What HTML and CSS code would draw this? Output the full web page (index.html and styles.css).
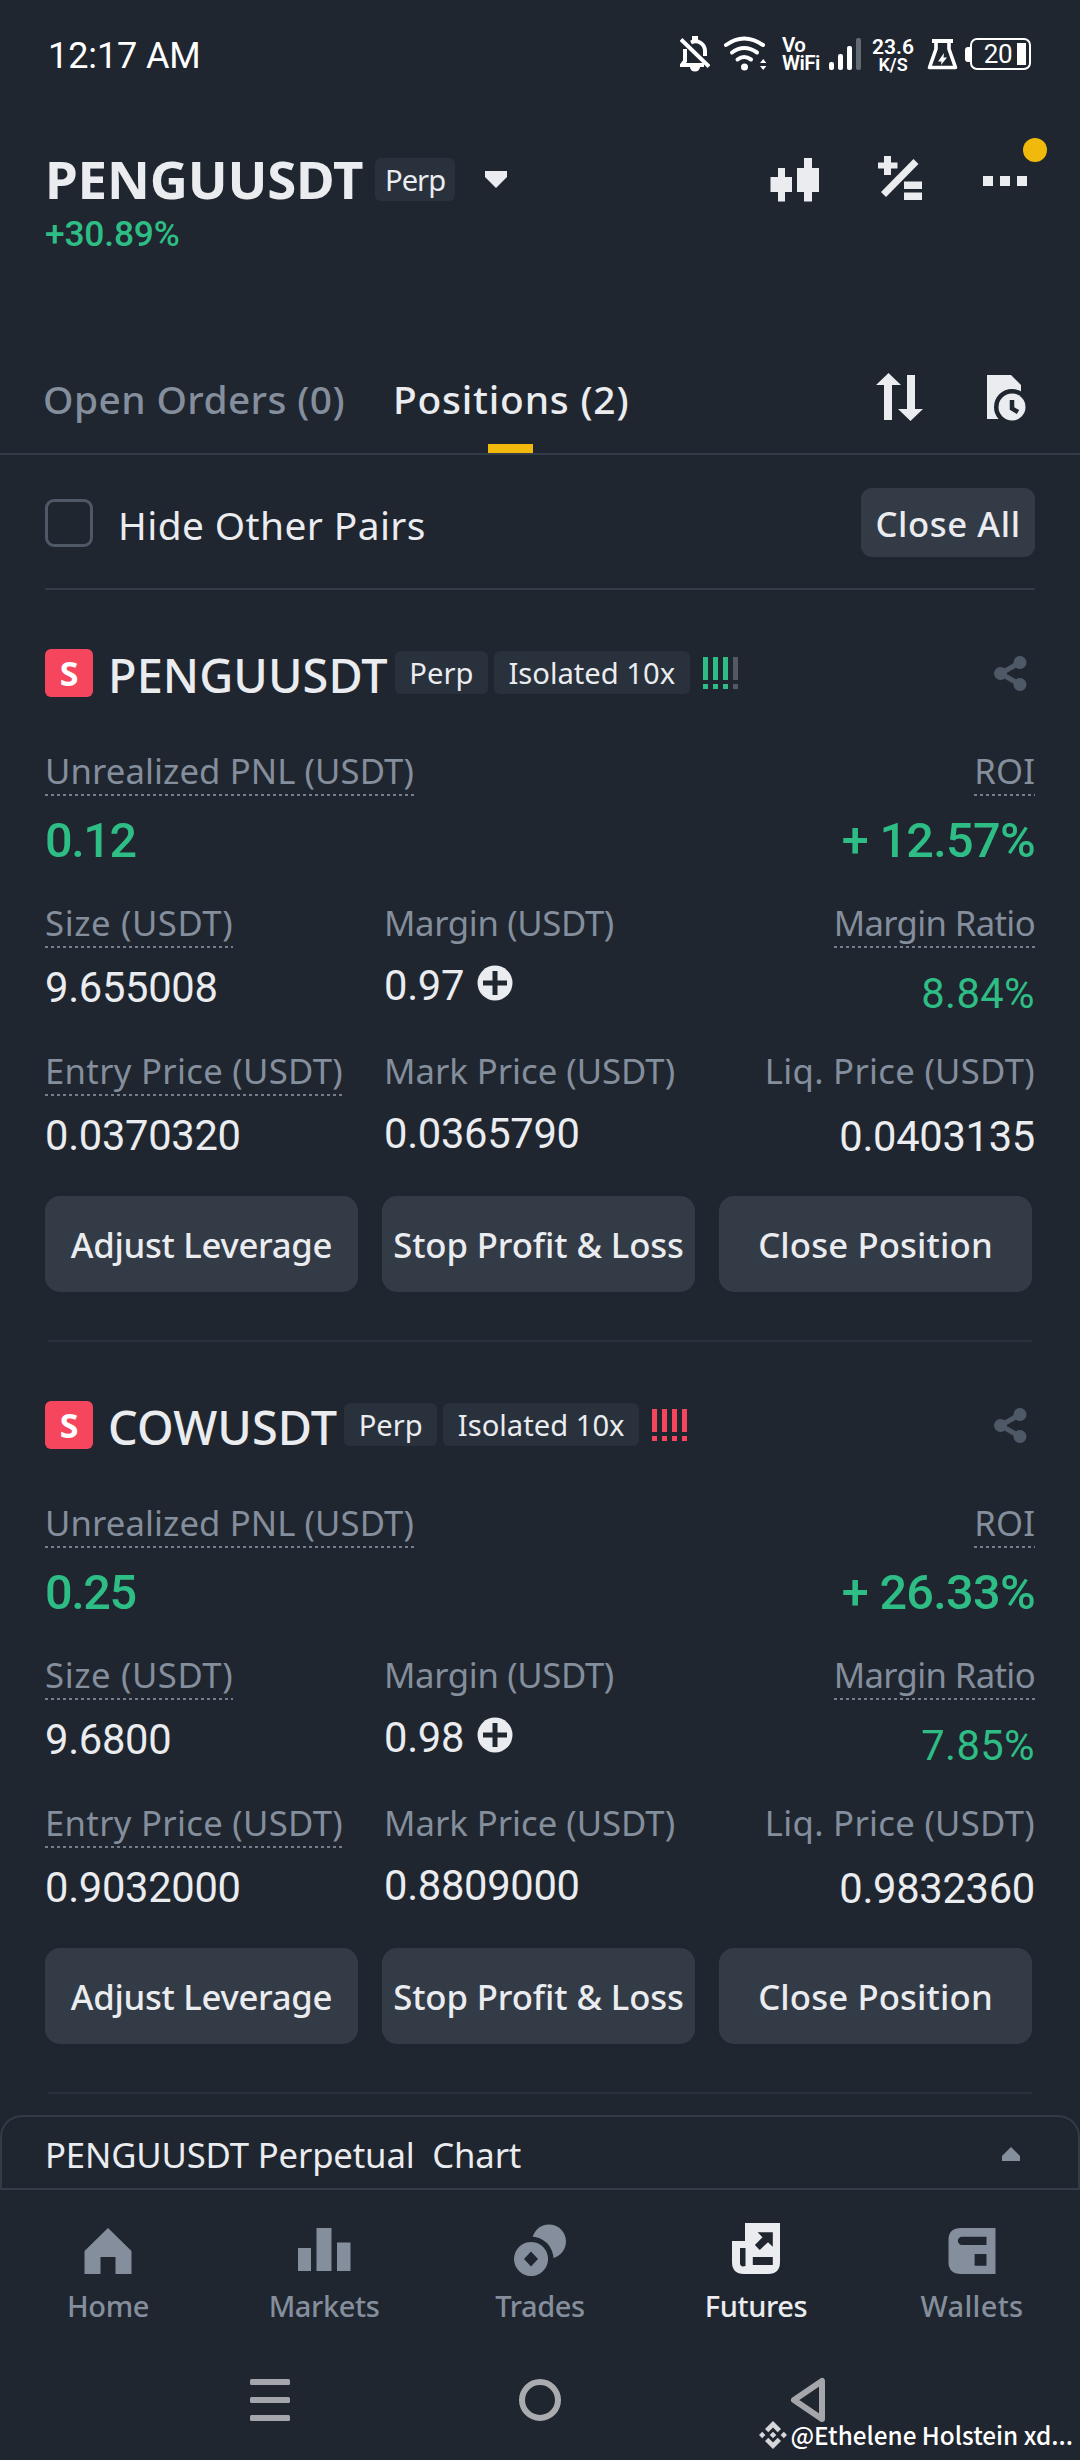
FILE: index.html
```html
<!DOCTYPE html>
<html lang="en">

<head>
    <meta charset="utf-8">
    <title>PENGUUSDT Perp</title>
    <link rel="stylesheet" href="styles.css">
</head>

<body>
    <div class="statusbar">
        <span class="clock">12:17 AM</span>
        <div class="status-icons">
            <svg class="bell" width="30" height="36" viewBox="0 0 30 36" fill="none" stroke="#fff" stroke-width="4">
                <path d="M5 13V25L2 29H24"/>
                <path d="M11 6.500C18 3 25 8 25 15V20"/>
                <path d="M1 3.500L29 30.500"/>
                <path d="M12 2.500H18" stroke-width="5"/>
                <path d="M10 31a5 4.500 0 0 0 10 0z" fill="#fff" stroke="none"/>
            </svg>
            <svg class="wifi" width="44" height="36" viewBox="0 0 44 36" fill="none" stroke="#fff" stroke-width="4" stroke-linecap="round">
                <path d="M3 9Q21 -4 40 9"/>
                <path d="M9 16.500Q21 7.500 34 16.500"/>
                <path d="M14.500 23.500Q21 18.500 28 23.500"/>
                <circle cx="21.500" cy="31" r="3.500" fill="#fff" stroke="none"/>
                <path d="M37 27l3.200-4 3.200 4zM37 30h6.400l-3.200 4z" fill="#fff" stroke="none"/>
            </svg>
            <div class="vowifi">Vo<br>WiFi</div>
            <svg class="signal" width="33" height="36" viewBox="0 0 33 36" fill="#fff">
                <rect x="0" y="26" width="5" height="8" rx="2"/>
                <rect x="9" y="18" width="5" height="16" rx="2"/>
                <rect x="18" y="10" width="5" height="24" rx="2"/>
                <rect x="27" y="2" width="5" height="32" rx="2" fill="#646a72"/>
            </svg>
            <div class="speed">23.6<br><span class="unit">K/S</span></div>
            <svg class="flask" width="31" height="36" viewBox="0 0 31 36" fill="none" stroke="#fff" stroke-width="3.600" stroke-linejoin="round">
                <path d="M5 5H26" stroke-width="4"/>
                <path d="M9 6V13L2.500 31.500H28.500L22 13V6"/>
                <path d="M17 17L11 25.500H14.500L14 29L20 21.500H16.500z" fill="#fff" stroke="none"/>
            </svg>
            <div class="battery"><div class="cell"><span>20</span><i></i></div></div>
        </div>
    </div>

    <header>
        <div class="pair">
            <h1>PENGUUSDT</h1>
            <span class="tag">Perp</span>
            <svg class="caret" width="22" height="17" viewBox="0 0 22 17" fill="#eaecef"><path d="M0 0H22V6L11 17L0 6z"/></svg>
            <div class="tools">
                <svg width="50" height="44" viewBox="0 0 50 44" fill="#eaecef">
                    <path d="M8 10H15V19H22V34H15V43.500H8V34H0.500V19H8z"/>
                    <path d="M34 0H42V10H49V34H42V43.500H34V34H27V10H34z"/>
                </svg>
                <svg class="calc" width="44" height="44" viewBox="0 0 44 44" fill="#eaecef">
                    <path d="M6 0H13V6.500H19.500V12.500H13V19H6V12.500H0V6.500H6z"/>
                    <path d="M3 36L35.500 3L40.500 8L8 41z"/>
                    <path d="M26 25.500H44V33H26zM26 36.500H44V44H26z"/>
                </svg>
                <div class="more">
                    <svg width="44" height="10" viewBox="0 0 44 10" fill="#eaecef"><path d="M0 0H10V10H0zM17 0H27V10H17zM34 0H44V10H34z"/></svg>
                </div>
            </div>
        </div>
        <div class="change">+30.89%</div>
    </header>

    <nav class="tabs">
        <a class="tab">Open Orders (0)</a>
        <a class="tab active">Positions (2)</a>
        <svg class="sort" width="47" height="48" viewBox="0 0 47 48" fill="#eaecef">
            <path d="M12.500 0L25 12H16V47H8V12H0z"/>
            <path d="M31 2H39V36H47L34.500 48L22 36H31z"/>
        </svg>
        <svg class="history" width="39" height="46" viewBox="0 0 39 46">
            <path d="M0 0H24L34 10V44H0z" fill="#eaecef"/>
            <circle cx="25" cy="32" r="18" fill="#1f262f"/>
            <circle cx="25" cy="32" r="13.500" fill="#eaecef"/>
            <path d="M25 25V33.500L31 37" fill="none" stroke="#1f262f" stroke-width="4.500"/>
        </svg>
    </nav>

    <div class="filter">
        <span class="checkbox"></span>
        <span class="filter-text">Hide Other Pairs</span>
        <button class="close-all">Close All</button>
    </div>

    <section class="card">
        <div class="card-head">
            <span class="side">S</span>
            <h2>PENGUUSDT</h2>
            <span class="tag">Perp</span>
            <span class="tag">Isolated 10x</span>
            <svg class="adl green" width="35" height="32" viewBox="0 0 35 32" fill="currentColor">
                <path d="M0 0H5V23H0zM0 27H5V32H0zM10 0H15V23H10zM10 27H15V32H10zM20 0H25V23H20zM20 27H25V32H20z"/>
                <path d="M30 0H35V23H30zM30 27H35V32H30z" fill="#535862"/>
            </svg>
            <svg class="share" width="33" height="35" viewBox="0 0 33 35" fill="#4f5867">
                <path d="M26 6.500L6.500 17.500L26 28.500" fill="none" stroke="#4f5867" stroke-width="5"/>
                <circle cx="6.500" cy="17.500" r="6.500"/><circle cx="26" cy="6.500" r="6.500"/><circle cx="26" cy="28.500" r="6.500"/>
            </svg>
        </div>
        <div class="pnl">
            <div><span class="label dotted">Unrealized PNL (USDT)</span><div class="big">0.12</div></div>
            <div class="right"><span class="label dotted">ROI</span><div class="big roi">+ 12.57%</div></div>
        </div>
        <div class="stats">
            <div><span class="label wide dotted">Size (USDT)</span><div class="num">9.655008</div></div>
            <div class="mid">
                <span class="label tight">Margin (USDT)</span>
                <div class="num">0.97<svg class="add" width="36" height="36" viewBox="0 0 36 36"><circle cx="18" cy="18" r="17.500" fill="#eaecef"/><path d="M18 6V30M6 18H30" stroke="#1f262f" stroke-width="5"/></svg></div>
            </div>
            <div class="right"><span class="label tighter dotted">Margin Ratio</span><div class="num ratio">8.84%</div></div>
            <div><span class="label dotted entry">Entry Price (USDT)</span><div class="num">0.0370320</div></div>
            <div class="mid"><span class="label mark">Mark Price (USDT)</span><div class="num">0.0365790</div></div>
            <div class="right"><span class="label entry">Liq. Price (USDT)</span><div class="num">0.0403135</div></div>
        </div>
        <div class="actions">
            <button>Adjust Leverage</button>
            <button>Stop Profit &amp; Loss</button>
            <button>Close Position</button>
        </div>
    </section>

    <section class="card">
        <div class="card-head">
            <span class="side">S</span>
            <h2>COWUSDT</h2>
            <span class="tag">Perp</span>
            <span class="tag">Isolated 10x</span>
            <svg class="adl red" width="35" height="32" viewBox="0 0 35 32" fill="currentColor">
                <path d="M0 0H5V23H0zM0 27H5V32H0zM10 0H15V23H10zM10 27H15V32H10zM20 0H25V23H20zM20 27H25V32H20z"/>
                <path d="M30 0H35V23H30zM30 27H35V32H30z"/>
            </svg>
            <svg class="share" width="33" height="35" viewBox="0 0 33 35" fill="#4f5867">
                <path d="M26 6.500L6.500 17.500L26 28.500" fill="none" stroke="#4f5867" stroke-width="5"/>
                <circle cx="6.500" cy="17.500" r="6.500"/><circle cx="26" cy="6.500" r="6.500"/><circle cx="26" cy="28.500" r="6.500"/>
            </svg>
        </div>
        <div class="pnl">
            <div><span class="label dotted">Unrealized PNL (USDT)</span><div class="big">0.25</div></div>
            <div class="right"><span class="label dotted">ROI</span><div class="big roi">+ 26.33%</div></div>
        </div>
        <div class="stats">
            <div><span class="label wide dotted">Size (USDT)</span><div class="num">9.6800</div></div>
            <div class="mid">
                <span class="label tight">Margin (USDT)</span>
                <div class="num">0.98<svg class="add" width="36" height="36" viewBox="0 0 36 36"><circle cx="18" cy="18" r="17.500" fill="#eaecef"/><path d="M18 6V30M6 18H30" stroke="#1f262f" stroke-width="5"/></svg></div>
            </div>
            <div class="right"><span class="label tighter dotted">Margin Ratio</span><div class="num ratio">7.85%</div></div>
            <div><span class="label dotted entry">Entry Price (USDT)</span><div class="num">0.9032000</div></div>
            <div class="mid"><span class="label mark">Mark Price (USDT)</span><div class="num">0.8809000</div></div>
            <div class="right"><span class="label entry">Liq. Price (USDT)</span><div class="num">0.9832360</div></div>
        </div>
        <div class="actions">
            <button>Adjust Leverage</button>
            <button>Stop Profit &amp; Loss</button>
            <button>Close Position</button>
        </div>
    </section>

    <div class="chart-bar">
        <span>PENGUUSDT Perpetual&nbsp; Chart</span>
        <svg width="18" height="14" viewBox="0 0 18 14" fill="#848e9c"><path d="M9 0L18 9V14H0V9z"/></svg>
    </div>

    <nav class="bottom-nav">
        <a>
            <svg viewBox="0 0 60 60"><path d="M30 8L53.500 31V54H37.500V37H22.500V54H6.500V31z"/></svg>
            <span>Home</span>
        </a>
        <a>
            <svg viewBox="0 0 60 60"><path d="M4 28H17V51H4zM22.500 8H37.500V51H22.500zM43 22.500H56.500V51H43z"/></svg>
            <span>Markets</span>
        </a>
        <a>
            <svg viewBox="0 0 60 60">
                <circle cx="39" cy="21.500" r="17"/>
                <circle cx="21" cy="39" r="22.500" fill="#1f262f"/>
                <path d="M21 22a17 17 0 1 0 0.100 0zM21 31.500L28 39L21 46.500L14 39z" fill-rule="evenodd"/>
            </svg>
            <span>Trades</span>
        </a>
        <a class="active">
            <svg viewBox="0 0 60 60">
                <path d="M19 3H54V42Q54 54 42 54H18Q6 54 6 42V21H19z"/>
                <path d="M14 28H19.500V46Q14 47.500 14 43zM26.800 37H46.800V45H26.800zM31.600 12.300H46.800V26.700L42 22.300L33.700 30L28.900 25L36.500 17.300z" fill="#1f262f"/>
            </svg>
            <span>Futures</span>
        </a>
        <a class="wallets">
            <svg viewBox="0 0 60 60">
                <path d="M19 8H53.500V54H19Q6.500 54 6.500 42V20Q6.500 8 19 8z"/>
                <path d="M20 16.700H44.500V25H20A4.150 4.150 0 0 1 20 16.700zM32.600 34H44.500V45.700H32.600z" fill="#1f262f"/>
            </svg>
            <span>Wallets</span>
        </a>
    </nav>

    <div class="system-nav">
        <svg width="40" height="42" viewBox="0 0 40 42" fill="#a5a6ab">
            <rect width="40" height="6" rx="1.500"/><rect y="18" width="40" height="6" rx="1.500"/><rect y="36" width="40" height="6" rx="1.500"/>
        </svg>
        <svg width="42" height="42" viewBox="0 0 42 42"><circle cx="21" cy="21" r="18" fill="none" stroke="#a9abae" stroke-width="6"/></svg>
        <svg class="back" width="36" height="46" viewBox="0 0 36 46"><path d="M32 4V42L4 23z" fill="none" stroke="#a5a6ab" stroke-width="6" stroke-linejoin="round"/></svg>
    </div>

    <div class="watermark">
        <svg width="28" height="28" viewBox="0 0 28 28" fill="#d6d7d9">
            <path d="M14 0L22 8L18.700 11.300L14 6.600L9.300 11.300L6 8z"/>
            <path d="M14 28L22 20L18.700 16.700L14 21.400L9.300 16.700L6 20z"/>
            <path d="M14 10.700L17.300 14L14 17.300L10.700 14zM3.200 10.800L6.400 14L3.200 17.200L0 14zM24.800 10.800L28 14L24.800 17.200L21.600 14z"/>
        </svg>
        <span>@Ethelene Holstein xd...</span>
    </div>
</body>

</html>
```
FILE: styles.css
```css
body {
    position: relative;
    width: 1080px;
    height: 2460px;
    margin: 0;
    overflow: hidden;
    background-color: #1f262f;
    color: #eaecef;
    font-family: "Noto Sans", sans-serif;
}

svg {
    display: block;
    flex: none;
}

h1, h2 {
    margin: 0;
}

button {
    border: none;
    padding: 1px 0 0;
    background-color: #333b47;
    color: #eaecef;
    font-family: inherit;
    font-size: 34.7px;
    font-weight: 500;
    letter-spacing: -0.1px;
    white-space: nowrap;
}

/* phone status bar */
.statusbar {
    display: flex;
    align-items: center;
    justify-content: space-between;
    height: 111px;
    padding: 0 49px 0 48px;
    font-family: Roboto, sans-serif;
    color: #fff;
}

.clock {
    font-size: 36px;
    letter-spacing: -0.1px;
}

.status-icons {
    display: flex;
    align-items: center;
    margin-top: -3px;
}

.wifi {
    margin-left: 13px;
}

.vowifi {
    width: 36px;
    margin-left: 15px;
    font-size: 20.5px;
    font-weight: 600;
    line-height: 18px;
    letter-spacing: -0.5px;
}

.signal {
    margin-left: 11px;
}

.speed {
    width: 42px;
    margin: 4px 0 0 10px;
    font-size: 21px;
    font-weight: 600;
    line-height: 17px;
    text-align: center;
}

.speed .unit {
    font-size: 18px;
}

.flask {
    margin-left: 13px;
}

.battery {
    display: flex;
    align-items: center;
    margin-left: 7px;
}

.battery::before {
    content: "";
    width: 5px;
    height: 15px;
    border-radius: 3px 0 0 3px;
    background-color: #fff;
}

.cell {
    display: flex;
    align-items: center;
    justify-content: flex-end;
    box-sizing: border-box;
    width: 61px;
    height: 32px;
    padding-right: 3px;
    border: 2px solid #fff;
    border-radius: 7px;
    font-size: 26px;
    letter-spacing: -0.5px;
}

.cell i {
    width: 9px;
    height: 22px;
    margin-left: 5px;
    background-color: #fff;
}

/* pair header */
header {
    box-sizing: border-box;
    height: 234px;
    padding: 36px 45px 0;
}

.pair {
    display: flex;
    align-items: center;
    height: 64px;
}

h1 {
    width: 330px;
    font-size: 52.8px;
    font-weight: 700;
    letter-spacing: -0.2px;
    line-height: 64px;
}

.tag {
    box-sizing: border-box;
    height: 43px;
    padding: 0 10px;
    border-radius: 6px;
    background-color: #29313d;
    font-size: 29.2px;
    line-height: 45px;
    white-space: nowrap;
}

.pair .tag {
    margin-top: 1px;
    letter-spacing: -1px;
}

.caret {
    margin-left: 30px;
}

.tools {
    display: flex;
    align-items: center;
    margin: 2px 0 0 auto;
}

.calc {
    margin: -4px 0 0 58px;
}

.more {
    position: relative;
    margin: 2px 8px 0 61px;
}

.more::after {
    content: "";
    position: absolute;
    top: -38px;
    right: -20px;
    width: 24px;
    height: 24px;
    border-radius: 50%;
    background-color: #f0b90b;
}

.change {
    color: #2ebd85;
    font-family: Roboto, sans-serif;
    font-size: 35.4px;
    font-weight: 500;
    line-height: 46px;
    letter-spacing: -0.2px;
}

/* tabs */
.tabs {
    display: flex;
    align-items: center;
    height: 108px;
    padding: 0 54px 0 43px;
    border-bottom: 2px solid #333b47;
}

.tab {
    position: relative;
    margin-right: 48px;
    color: #848e9c;
    font-size: 38.9px;
    font-weight: 500;
    line-height: 108px;
    letter-spacing: 0.4px;
}

.tab.active {
    color: #eaecef;
    letter-spacing: 0.8px;
}

.tab.active::after {
    content: "";
    position: absolute;
    bottom: 0;
    left: 50%;
    width: 45px;
    height: 9px;
    margin-left: -23px;
    background-color: #f0b90b;
}

.sort {
    margin: -5px 0 0 auto;
}

.history {
    margin: -2px 0 0 64px;
}

.filter {
    display: flex;
    align-items: center;
    height: 130px;
    margin: 0 45px;
    padding-top: 3px;
    border-bottom: 2px solid #333b47;
}

.checkbox {
    box-sizing: border-box;
    width: 48px;
    height: 48px;
    border: 3px solid #4f5867;
    border-radius: 9px;
}

.filter-text {
    margin: 2px 0 0 25px;
    font-size: 38.9px;
    letter-spacing: 0.4px;
}

.close-all {
    width: 174px;
    height: 69px;
    margin: -1px 0 0 auto;
    padding-top: 2px;
    border-radius: 11px;
    letter-spacing: 0.6px;
}

/* position card */
.card {
    box-sizing: border-box;
    height: 752px;
    padding: 53px 45px 0;
    background: linear-gradient(#29313d, #29313d) 48px 100% / 984px 2px no-repeat;
}

.card-head {
    display: flex;
    align-items: center;
    height: 60px;
}

.side {
    width: 48px;
    height: 48px;
    border-radius: 6px;
    background-color: #f6465d;
    color: #fff;
    font-size: 34px;
    font-weight: 700;
    line-height: 48px;
    text-align: center;
}

h2 {
    margin: 3px 0 0 15px;
    padding-right: 7px;
    font-size: 46.8px;
    font-weight: 500;
    line-height: 60px;
    letter-spacing: 0.1px;
}

.card-head .tag {
    margin-top: -2px;
    padding: 0 14.5px;
    letter-spacing: 0;
}

.card-head .tag + .tag {
    margin-left: 6px;
}

.adl {
    margin-left: 13px;
    margin-top: -1px;
}

.share {
    margin-left: auto;
    margin-right: 8px;
}

.green {
    color: #2ebd85;
}

.red {
    color: #f6465d;
}

.pnl {
    display: flex;
    justify-content: space-between;
    height: 152px;
    margin-top: 44px;
}

.label {
    display: inline-block;
    padding-bottom: 2px;
    color: #848e9c;
    font-size: 34.7px;
    line-height: 47px;
    letter-spacing: 0.1px;
    white-space: nowrap;
    vertical-align: top;
}

.wide {
    letter-spacing: 0.6px;
}

.tight {
    letter-spacing: -0.35px;
}

.tighter {
    letter-spacing: -0.65px;
}

.entry {
    letter-spacing: 0.3px;
}

.mark {
    letter-spacing: 0;
}

.dotted {
    background: repeating-linear-gradient(90deg, #747d8b 0 3px, transparent 3px 6px) 0 100% / 100% 2px no-repeat;
}

.right {
    text-align: right;
}

.big {
    margin-top: 17px;
    color: #2ebd85;
    font-family: Roboto, sans-serif;
    font-size: 48.6px;
    font-weight: 500;
    line-height: 56px;
    letter-spacing: -1.4px;
}

.roi {
    letter-spacing: -0.7px;
}

.stats {
    display: grid;
    grid-template-columns: 339px 321px 330px;
    grid-template-rows: 148px 149px;
}

.num {
    display: flex;
    align-items: center;
    height: 50px;
    margin-top: 14px;
    font-family: Roboto, sans-serif;
    font-size: 41.7px;
    letter-spacing: -0.3px;
}

.mid .num {
    margin-top: 12px;
}

.right .num {
    justify-content: flex-end;
    margin-top: 15px;
}

.right .ratio {
    margin-top: 20px;
    color: #2ebd85;
    letter-spacing: 0.4px;
}

.add {
    margin: -5px 0 0 13px;
}

.actions {
    display: flex;
    gap: 24px;
}

.actions button {
    width: 313px;
    height: 96px;
    border-radius: 15px;
}

.actions button:first-child {
    letter-spacing: -0.28px;
}

.actions button:last-child {
    letter-spacing: 0.15px;
}

/* chart drawer and navigation */
.chart-bar {
    display: flex;
    align-items: center;
    justify-content: space-between;
    box-sizing: border-box;
    height: 73px;
    margin-top: 21px;
    padding: 3px 58px 0 43px;
    border: 2px solid #333b47;
    border-bottom: none;
    border-radius: 22px 22px 0 0;
    font-size: 34.7px;
    letter-spacing: -0.15px;
}

.bottom-nav {
    display: grid;
    grid-template-columns: repeat(5, 1fr);
    height: 150px;
    border-top: 2px solid #333b47;
}

.bottom-nav a {
    display: flex;
    flex-direction: column;
    align-items: center;
    padding-top: 30px;
    color: #848e9c;
    font-size: 29px;
    font-weight: 500;
    line-height: 40px;
    letter-spacing: -0.4px;
}

.bottom-nav svg {
    width: 60px;
    height: 60px;
    margin-bottom: 6px;
    fill: currentColor;
}

.bottom-nav .active {
    color: #eaecef;
}

.bottom-nav .wallets {
    letter-spacing: 0.3px;
}

.system-nav {
    display: grid;
    grid-template-columns: repeat(3, 270px);
    align-items: center;
    justify-items: center;
    justify-content: center;
    height: 120px;
}

.back {
    margin-right: 4px;
}

.watermark {
    position: absolute;
    right: 7px;
    bottom: 8px;
    display: flex;
    align-items: center;
    height: 34px;
    color: #fff;
    font-family: "Noto Sans CJK SC", sans-serif;
    font-size: 24.3px;
    font-weight: 500;
    line-height: 34px;
}

.watermark svg {
    margin: -1px 4px 0 0;
}
```
